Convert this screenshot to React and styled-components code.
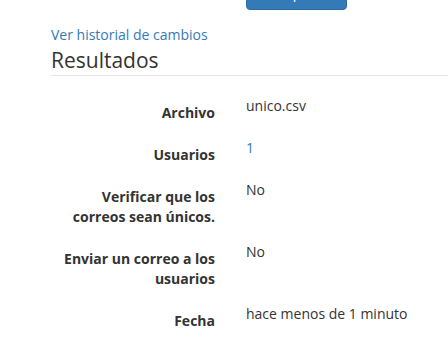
import React from 'react';
import styled, { createGlobalStyle } from 'styled-components';

const GlobalStyle = createGlobalStyle`
  html, body {
    margin: 0;
    padding: 0;
    background: #fff;
  }
  body {
    font-family: "Open Sans", "Liberation Sans", sans-serif;
    font-size: 14px;
    line-height: 1.42857;
    color: #333;
    overflow: hidden;
  }
`;

const Page = styled.div`
  padding-left: 51px;
`;

const Toolbar = styled.div`
  display: flex;
  padding-left: 195px;
  margin-top: -24px;
`;

const Button = styled.button`
  display: inline-flex;
  align-items: center;
  justify-content: center;
  gap: 4px;
  width: 101px;
  padding: 6px 12px;
  font-family: inherit;
  font-size: 14px;
  line-height: 20px;
  color: #fff;
  background: #337ab7;
  border: 1px solid #2e6da4;
  border-radius: 4px;
`;

const HistoryLink = styled.a`
  display: block;
  margin-top: 15px;
  color: #337ab7;
  text-decoration: none;
`;

const Heading = styled.h3`
  margin: 4px 0 20px;
  padding-bottom: 3px;
  font-size: 21px;
  font-weight: 400;
  line-height: 1.1;
  color: #333;
  border-bottom: 1px solid #e5e5e5;
`;

const Details = styled.dl`
  display: grid;
  grid-template-columns: 164px 1fr;
  column-gap: 31px;
  row-gap: 15px;
  margin: 0;
`;

const Term = styled.dt`
  padding-top: 7px;
  text-align: right;
  font-weight: 700;
`;

const Value = styled.dd`
  margin: 0;
  color: ${p => (p.$link ? '#337ab7' : '#333')};
`;

const rows = [
  ['Archivo', 'unico.csv'],
  ['Usuarios', '1', true],
  ['Verificar que los correos sean únicos.', 'No'],
  ['Enviar un correo a los usuarios', 'No'],
  ['Fecha', 'hace menos de 1 minuto'],
];

export default function App() {
  return (
    <Page>
      <GlobalStyle />
      <Toolbar>
        <Button>
          <svg width="14" height="14" viewBox="0 0 24 24" fill="none" stroke="#fff" strokeWidth="2.5">
            <path d="M12 16V4M6 10l6-6 6 6M4 20h16" />
          </svg>
          Importar
        </Button>
      </Toolbar>
      <HistoryLink href="#">Ver historial de cambios</HistoryLink>
      <Heading>Resultados</Heading>
      <Details>
        {rows.map(([term, value, link]) => (
          <React.Fragment key={term}>
            <Term>{term}</Term>
            <Value $link={link}>{value}</Value>
          </React.Fragment>
        ))}
      </Details>
    </Page>
  );
}
